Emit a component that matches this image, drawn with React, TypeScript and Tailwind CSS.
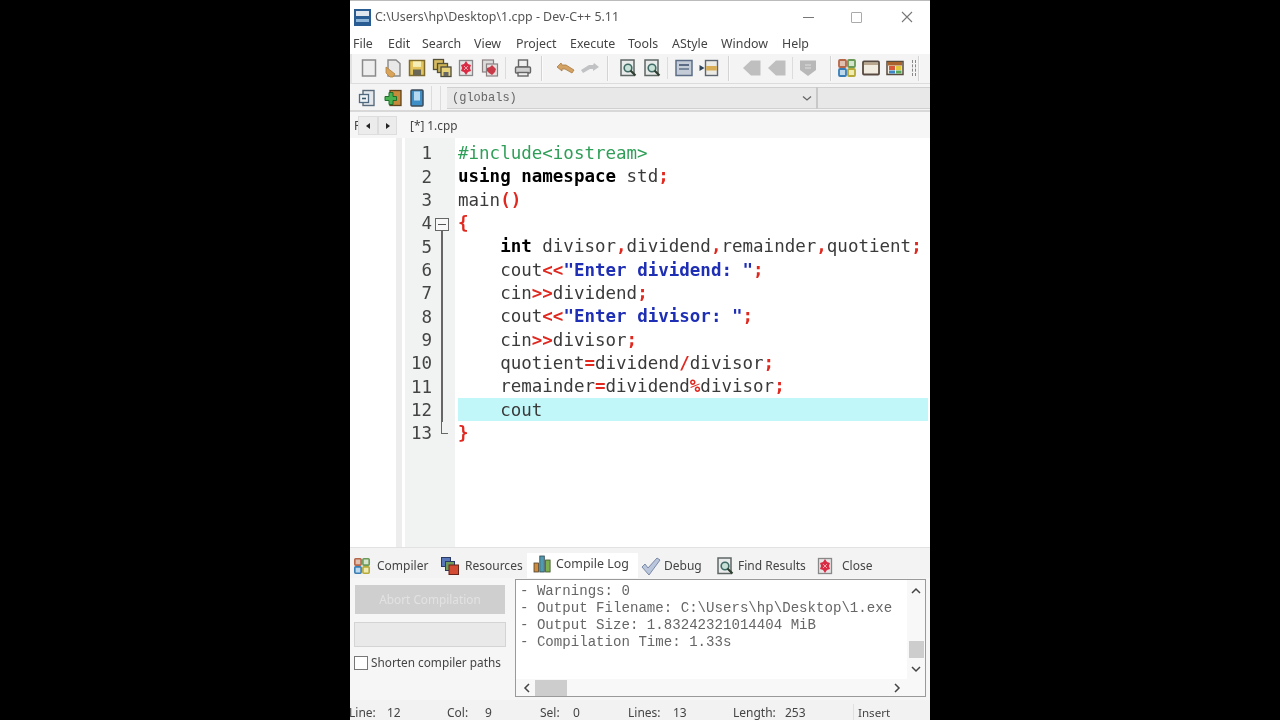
import React from "react";

const mono = "font-['DejaVu_Sans_Mono',monospace]";
const ui = "font-['Noto_Sans','Open_Sans',sans-serif]";
const log = "font-['Liberation_Mono',monospace]";

const Svg = ({ children, s = 20 }: { children: React.ReactNode; s?: number }) => (
  <svg width={s} height={s} viewBox="0 0 20 20" className="shrink-0">{children}</svg>
);

const IconNew = () => <Svg><rect x="3.5" y="2" width="13" height="16" fill="#eeeeee" stroke="#8a8a8a" strokeWidth="1.5" /></Svg>;
const IconOpen = () => <Svg><path d="M5 2h8l4 3.5V18H5z" fill="#e8e8e8" stroke="#888" strokeWidth="1.4" /><path d="M3 9l9 7-2 3H7l-4-4z" fill="#d9a45a" stroke="#b0803f" strokeWidth=".8" /></Svg>;
const IconSave = () => <Svg><rect x="2.5" y="2.5" width="15" height="15" fill="#e3c45c" stroke="#7d6a2c" strokeWidth="1.5" /><rect x="6" y="3.4" width="8" height="5.5" fill="#f6eeb8" /><rect x="6" y="11.5" width="8" height="6" fill="#6b6757" /></Svg>;
const IconSaveAll = () => <Svg><rect x="1.5" y="1.5" width="10" height="10" fill="#d6bb60" stroke="#555038" strokeWidth="1.3" /><rect x="5.5" y="5.5" width="10" height="9" fill="#cdb254" stroke="#555038" strokeWidth="1.3" /><rect x="9" y="9" width="10" height="9.5" fill="#e6d078" stroke="#4a4a3e" strokeWidth="1.3" /><rect x="11.5" y="14" width="5" height="4" fill="#666" /></Svg>;
const IconClose = () => <Svg><rect x="3.5" y="2.5" width="13" height="15" fill="#e6e6e6" stroke="#888" strokeWidth="1.3" /><path d="M5 7l3-1 2-3 2 3 3 1-1 3 1 3-3 1-2 3-2-3-3-1 1-3z" fill="#d92c44" /><path d="M8 8l4 4M12 8l-4 4" stroke="#f2a0a8" strokeWidth="1" /></Svg>;
const IconCloseAll = () => <Svg><rect x="2.5" y="2" width="11" height="12" fill="#dcdcdc" stroke="#8a8080" strokeWidth="1.2" /><rect x="6.5" y="6" width="11" height="12" fill="#e4e0e0" stroke="#8a8080" strokeWidth="1.2" /><path d="M7 10l3-1 2-2 2 2 2 2-1 3-3 3-3-2-2-2z" fill="#c83a48" /></Svg>;
const IconPrint = () => <Svg><rect x="5.5" y="2" width="9" height="7" fill="#efefef" stroke="#666" strokeWidth="1.4" /><rect x="2.5" y="9" width="15" height="6" rx="1" fill="#d0d0d0" stroke="#666" strokeWidth="1.4" /><rect x="5" y="14.5" width="10" height="3.5" fill="#efefef" stroke="#666" strokeWidth="1.4" /></Svg>;
const IconUndo = () => <Svg><path d="M1 9l4-4 1 2 4 0 8 5-2 3-7-4-3 0 0 2z" fill="#d4a262" stroke="#a87a44" strokeWidth=".8" /></Svg>;
const IconRedo = () => <Svg><path d="M19 9l-5-4-1 2h-4l-8 5 2 3 7-4h3v2z" fill="#c0c2c4" /></Svg>;
const IconFind = () => <Svg><rect x="3" y="2" width="13" height="15.5" fill="#e8ebea" stroke="#5f6666" strokeWidth="1.5" /><circle cx="10" cy="10" r="3.8" fill="#c8e2d8" stroke="#3f6a66" strokeWidth="1.6" /><path d="M12.5 12.5l5 5" stroke="#304030" strokeWidth="2.2" /></Svg>;
const IconPanel = () => <Svg><rect x="2" y="2.5" width="16" height="15" fill="#c4ccd8" stroke="#5c6c86" strokeWidth="1.5" /><rect x="5" y="6" width="10" height="2" fill="#5c6c86" /><rect x="5" y="10" width="10" height="2" fill="#7a889e" /></Svg>;
const IconGoto = () => <Svg><rect x="6.5" y="2.5" width="12" height="15" fill="#eceae4" stroke="#5e6672" strokeWidth="1.4" /><rect x="7.2" y="8" width="10.6" height="4.5" fill="#d9ad55" /><path d="M0.5 7l5 3-5 3z" fill="#2f4458" /></Svg>;
const IconGrayL = () => <Svg><path d="M9 2.5h9.5v15H9l-8-7.5z" fill="#bfbfbf" /></Svg>;
const IconGrayS = () => <Svg><path d="M2 2.5h16V12l-8 6-8-6z" fill="#b8b8b8" /><path d="M7 7h6M7 10h6" stroke="#dedede" /></Svg>;
const IconGrid = ({ s = 20 }: { s?: number }) => <Svg s={s}><rect x="2" y="2" width="7" height="7" rx="1" fill="#e0c0ae" stroke="#b5674a" strokeWidth="1.8" /><rect x="11" y="2" width="7" height="7" rx="1" fill="#d5e4cc" stroke="#6b9a58" strokeWidth="1.8" /><rect x="2" y="11" width="7" height="7" rx="1" fill="#bcd8ec" stroke="#3a7db5" strokeWidth="1.8" /><rect x="11" y="11" width="7" height="7" rx="1" fill="#f0ecb0" stroke="#b5a93a" strokeWidth="1.8" /></Svg>;
const IconWin = () => <Svg><rect x="2" y="3.5" width="16" height="13" rx="1" fill="#f2ece0" stroke="#584a40" strokeWidth="1.8" /><rect x="3" y="4.5" width="14" height="2.5" fill="#b9a68c" /></Svg>;
const IconWin2 = () => <Svg><rect x="2" y="3.5" width="16" height="13" fill="#f4f0e4" stroke="#584a3c" strokeWidth="1.5" /><rect x="3" y="4" width="14" height="3.5" fill="#a8642c" /><rect x="4" y="8" width="6" height="4" fill="#d9583a" /><rect x="11" y="8" width="5.5" height="4" fill="#e0c83a" /><rect x="4" y="12.5" width="6" height="3" fill="#3f86c9" /><rect x="11" y="12.5" width="5.5" height="3" fill="#58a85a" /></Svg>;
const IconInsert = () => <Svg><rect x="6" y="2.5" width="11" height="15" fill="#e4e8ec" stroke="#5a6c7c" strokeWidth="1.4" /><rect x="2.5" y="6.5" width="9" height="8" fill="#eef2f6" stroke="#4f6a80" strokeWidth="1.3" /><path d="M5 10.5h4" stroke="#36566e" strokeWidth="1.6" /></Svg>;
const IconAdd = () => <Svg><rect x="7" y="2.5" width="11" height="15" fill="#c68a3a" stroke="#5f4420" strokeWidth="1.3" /><path d="M6 4.5v4H2v4h4v4h4v-4h3.5v-4H10v-4z" fill="#46b350" stroke="#1e6d28" /></Svg>;
const IconBook = () => <Svg><rect x="4" y="2" width="12" height="16" rx="1" fill="#3d8ec7" stroke="#3a4a5a" strokeWidth="1.5" /><rect x="7" y="3.5" width="6" height="9" fill="#b4d9f0" /></Svg>;
const IconRes = () => <Svg s={20}><rect x="1.5" y="1.5" width="9" height="9" fill="#5777b8" stroke="#2a3a64" /><rect x="5.5" y="5.5" width="9" height="9" fill="#6f9a5c" stroke="#2a3a64" /><rect x="9" y="9" width="9.5" height="9.5" fill="#d24b32" stroke="#6a2318" /></Svg>;
const IconBars = () => <Svg><rect x="2" y="9" width="4.5" height="9" fill="#d08a3a" stroke="#4a4030" strokeWidth=".8" /><rect x="7.8" y="2" width="4.5" height="16" fill="#4f9ab0" stroke="#30454a" strokeWidth=".8" /><rect x="13.6" y="6" width="4.5" height="12" fill="#7fb04f" stroke="#3e5226" strokeWidth=".8" /></Svg>;
const IconCheck = () => <Svg><path d="M1 11l3-3 3 4 9-10 3 2-11 15z" fill="#b9c6dc" stroke="#7c8aa8" strokeWidth="1" /></Svg>;

const Sep = () => <div className="w-[2px] h-[25px] mx-[1px] border-l border-[#d4d4d4] bg-[#fafafa] shrink-0" />;
const Thin = () => <div className="w-[1px] h-[22px] bg-[#dcdcdc] shrink-0" />;
const Gap = ({ w }: { w: string }) => <div className={`${w} shrink-0`} />;
const Cell = ({ children, w = "w-[24px]" }: { children: React.ReactNode; w?: string }) => (
  <div className={`${w} flex justify-center shrink-0`}>{children}</div>
);

type Tok = [string, string?];
const R = "text-[#e0281f] font-bold";
const B = "text-[#1f2fb5] font-bold";
const K = "text-black font-bold";
const G = "text-[#2f9f58]";
const lines: Tok[][] = [
  [["#include<iostream>", G]],
  [["using namespace", K], [" std"], [";", R]],
  [["main"], ["()", R]],
  [["{", R]],
  [["    "], ["int", K], [" divisor"], [",", R], ["dividend"], [",", R], ["remainder"], [",", R], ["quotient"], [";", R]],
  [["    cout"], ["<<", R], ['"Enter dividend: "', B], [";", R]],
  [["    cin"], [">>", R], ["dividend"], [";", R]],
  [["    cout"], ["<<", R], ['"Enter divisor: "', B], [";", R]],
  [["    cin"], [">>", R], ["divisor"], [";", R]],
  [["    quotient"], ["=", R], ["dividend"], ["/", R], ["divisor"], [";", R]],
  [["    remainder"], ["=", R], ["dividend"], ["%", R], ["divisor"], [";", R]],
  [["    cout"]],
  [["}", R]],
];

const Fold = ({ n }: { n: number }) => {
  if (n === 4)
    return (
      <div className="relative w-[14px] h-full flex items-center justify-center">
        <div className="w-[14px] h-[13px] border border-[#666] bg-[#f8f8f8] flex items-center justify-center">
          <div className="w-[8px] h-[1px] bg-[#555]" />
        </div>
        <div className="absolute left-[6px] top-[18px] bottom-0 w-[1.5px] bg-[#666]" />
      </div>
    );
  if (n > 4 && n < 13) return <div className="w-[14px] h-full pl-[6px]"><div className="w-[1.5px] h-full bg-[#666]" /></div>;
  if (n === 13)
    return (
      <div className="w-[14px] h-full pl-[6px]">
        <div className="w-[7px] h-[12px] border-l-[1.5px] border-b-[1.5px] border-[#666]" />
      </div>
    );
  return <div className="w-[14px]" />;
};

const Tab = ({ icon, label, w, g, p }: { icon: React.ReactNode; label: string; w: string; g: string; p: string }) => (
  <div className={`${w} ${g} ${p} shrink-0 flex items-center h-[24px] self-end`}>
    {icon}
    <span className="text-[12px] text-[#444] whitespace-nowrap">{label}</span>
  </div>
);

const Stat = ({ w, label, value, vw }: { w: string; label: string; value: string; vw: string }) => (
  <div className={`${w} shrink-0 flex`}>
    <span className={vw}>{label}</span>
    <span>{value}</span>
  </div>
);

export default function App() {
  return (
    <div className="w-[1280px] h-[720px] bg-black flex justify-center overflow-hidden">
      <div className={`w-[580px] h-[720px] bg-[#f5f5f5] flex flex-col overflow-hidden blur-[0.4px] ${ui}`}>
        {/* title */}
        <div className="h-[33px] shrink-0 bg-white border-t border-[#bbb] flex items-center pl-[4px] text-[#555]">
          <svg width="17" height="17" viewBox="0 0 17 17" className="shrink-0">
            <rect width="17" height="17" fill="#2a5c94" />
            <rect x="2" y="2" width="13" height="5" fill="#dfe6ee" />
            <rect x="2" y="10" width="13" height="3" fill="#8fb6d8" />
          </svg>
          <span className="ml-[4px] text-[12.4px] whitespace-nowrap">C:\Users\hp\Desktop\1.cpp - Dev-C++ 5.11</span>
          <div className="ml-auto flex items-center">
            <div className="w-[11px] h-[1px] bg-[#777]" />
            <div className="ml-[37px] w-[11px] h-[11px] border border-[#aaa] rounded-[1px]" />
            <svg width="12" height="12" viewBox="0 0 12 12" className="ml-[39px] mr-[17px]">
              <path d="M1 1l10 10M11 1L1 11" stroke="#777" strokeWidth="1.1" />
            </svg>
          </div>
        </div>
        {/* menu */}
        <div className="h-[21px] shrink-0 bg-white flex items-center pt-[1px] text-[12.4px] text-[#444]">
          <span className="ml-[3px] w-[35px]">File</span>
          <span className="w-[34px]">Edit</span>
          <span className="w-[52px]">Search</span>
          <span className="w-[42px]">View</span>
          <span className="w-[54px]">Project</span>
          <span className="w-[58px]">Execute</span>
          <span className="w-[44px]">Tools</span>
          <span className="w-[49px]">AStyle</span>
          <span className="w-[61px]">Window</span>
          <span>Help</span>
        </div>
        {/* toolbar 1 */}
        <div className="h-[30px] shrink-0 bg-[#f4f4f4] border-b border-[#dcdcdc] border-l-2 border-l-[#e2e2e2] flex items-center pl-[5px] pb-[1px] overflow-hidden">
          <Cell><IconNew /></Cell>
          <Cell w="w-[23px]"><IconOpen /></Cell>
          <Cell w="w-[25px]"><IconSave /></Cell>
          <Cell w="w-[25px]"><IconSaveAll /></Cell>
          <Cell><IconClose /></Cell>
          <Cell><IconCloseAll /></Cell>
          <Gap w="w-[3px]" />
          <Thin />
          <Cell w="w-[34px]"><IconPrint /></Cell>
          <Sep />
          <Gap w="w-[10px]" />
          <Cell><IconUndo /></Cell>
          <Cell><IconRedo /></Cell>
          <Gap w="w-[4px]" />
          <Sep />
          <Gap w="w-[8px]" />
          <IconFind />
          <Gap w="w-[4px]" />
          <IconFind />
          <Gap w="w-[5px]" />
          <Thin />
          <Gap w="w-[6px]" />
          <IconPanel />
          <Gap w="w-[5px]" />
          <IconGoto />
          <Gap w="w-[8px]" />
          <Sep />
          <Gap w="w-[11px]" />
          <IconGrayL />
          <Gap w="w-[5px]" />
          <IconGrayL />
          <Gap w="w-[5px]" />
          <Thin />
          <Gap w="w-[5px]" />
          <IconGrayS />
          <Gap w="w-[11px]" />
          <Sep />
          <Gap w="w-[4px]" />
          <IconGrid />
          <Gap w="w-[4px]" />
          <IconWin />
          <Gap w="w-[4px]" />
          <IconWin2 />
          <div className="w-[4px] ml-[7px] h-[16px] border-x border-dashed border-[#888] shrink-0" />
          <Gap w="w-[1px]" />
          <Sep />
        </div>
        {/* toolbar 2 */}
        <div className="h-[28px] shrink-0 bg-[#f4f4f4] border-b-2 border-[#d8d8d8] flex items-center pl-[7px] pt-[1px]">
          <IconInsert />
          <Gap w="w-[6px]" />
          <IconAdd />
          <Gap w="w-[4px]" />
          <IconBook />
          <Gap w="w-[4px]" />
          <div className="w-[10px] h-[24px] border-x border-[#dcdcdc] shrink-0" />
          <div className="ml-[6px] w-[369px] h-[22px] bg-[#e8e8e8] border-y border-[#d0d0d0] flex items-center pl-[5px] pr-[3px] shrink-0">
            <span className={`text-[12px] text-[#666] pt-[1px] ${log}`}>(globals)</span>
            <svg width="12" height="12" viewBox="0 0 12 12" className="ml-auto">
              <path d="M2 4.5l4 3.5 4-3.5" fill="none" stroke="#666" strokeWidth="1.3" />
            </svg>
          </div>
          <div className="w-[2px] h-[22px] bg-[#c8c8c8] shrink-0" />
          <div className="flex-1 h-[22px] bg-[#e8e8e8] border-y border-[#d0d0d0]" />
        </div>
        {/* tabs */}
        <div className="h-[26px] shrink-0 bg-[#f6f6f6] flex items-center pt-[1px]">
          <span className="w-[4px] overflow-hidden text-[12px] text-[#444] ml-[4px]">P</span>
          <div className="w-[20px] h-[19px] bg-[#ececec] border border-[#ddd] flex items-center justify-center">
            <div className="w-0 h-0 border-y-[3px] border-y-transparent border-r-[4px] border-r-[#222]" />
          </div>
          <div className="w-[19px] h-[19px] bg-[#ececec] border border-[#ddd] flex items-center justify-center">
            <div className="w-0 h-0 border-y-[3px] border-y-transparent border-l-[4px] border-l-[#222]" />
          </div>
          <span className="ml-[13px] text-[11.8px] text-[#444]">[*] 1.cpp</span>
        </div>
        {/* editor area */}
        <div className="flex-1 min-h-0 flex bg-white">
          <div className="w-[46px] shrink-0 bg-white" />
          <div className="w-[6px] shrink-0 bg-[#ededed]" />
          <div className="w-[3px] shrink-0 bg-white" />
          <div className="w-[50px] shrink-0 bg-[#f1f2f2] pt-[4.5px]">
            {lines.map((_, i) => (
              <div key={i} className={`h-[23.33px] flex items-center text-[17.5px] text-[#444] ${mono}`}>
                <span className="w-[27px] text-right leading-none">{i + 1}</span>
                <div className="w-[3px]" />
                <Fold n={i + 1} />
              </div>
            ))}
          </div>
          <div className="w-[3px] shrink-0" />
          <div className={`flex-1 min-w-0 pt-[3.5px] text-[17.5px] text-[#3a3a3a] ${mono}`}>
            {lines.map((l, i) => (
              <div key={i} className={`h-[23.33px] flex items-center whitespace-pre mr-[2px] ${i === 11 ? "bg-[#c2f7fa]" : ""}`}>
                <span>
                  {l.map((t, j) => (
                    <span key={j} className={t[1] ?? ""}>{t[0]}</span>
                  ))}
                </span>
              </div>
            ))}
          </div>
        </div>
        {/* bottom tabs */}
        <div className="h-[31px] shrink-0 bg-[#f3f3f3] flex items-center border-t border-[#e2e2e2] pl-[1px]">
          <Tab w="w-[87px]" g="gap-[6px]" p="pl-[2px]" icon={<IconGrid s={18} />} label="Compiler" />
          <Tab w="w-[89px]" g="gap-[5px]" p="pl-[2px]" icon={<IconRes />} label="Resources" />
          <div className="w-[111px] shrink-0 h-[25px] self-end bg-white flex items-center gap-[4px] pl-[5px] pb-[3px]">
            <IconBars />
            <span className="text-[12.4px] text-[#444] whitespace-nowrap">Compile Log</span>
          </div>
          <Tab w="w-[75px]" g="gap-[3px]" p="pl-[3px]" icon={<IconCheck />} label="Debug" />
          <Tab w="w-[100px]" g="gap-[3px]" p="pl-[2px]" icon={<IconFind />} label="Find Results" />
          <Tab w="w-[70px]" g="gap-[7px]" p="pl-[2px]" icon={<IconClose />} label="Close" />
        </div>
        {/* bottom panel */}
        <div className="h-[122px] shrink-0 flex bg-[#f6f6f6] pl-[5px] pr-[4px] pt-[1px]">
          <div className="w-[152px] shrink-0 pt-[6px]">
            <div className="w-[150px] h-[29px] bg-[#cfcfcf] flex items-center justify-center text-[11.8px] text-[#e2e2e2]">
              Abort Compilation
            </div>
            <div className="w-[152px] h-[25px] mt-[8px] -ml-[1px] bg-[#e9e9e9] border border-[#d4d4d4]" />
            <div className="flex items-center mt-[7px] -ml-[1px] gap-[3px] whitespace-nowrap text-[11.8px] text-[#444]">
              <div className="w-[14px] h-[14px] border border-[#777] bg-white" />
              Shorten compiler paths
            </div>
          </div>
          <div className="ml-[8px] flex-1 h-[118px] border border-[#9a9a9a] bg-white flex">
            <div className="flex-1 min-w-0 flex flex-col">
              <div className={`flex-1 pl-[4px] pt-[3px] text-[14.1px] leading-[17px] text-[#666] whitespace-pre ${log}`}>
                <div>- Warnings: 0</div>
                <div>- Output Filename: C:\Users\hp\Desktop\1.exe</div>
                <div>- Output Size: 1.83242321014404 MiB</div>
                <div>- Compilation Time: 1.33s</div>
              </div>
              <div className="h-[17px] bg-[#f8f8f8] flex items-center pl-[7px] pr-[6px]">
                <svg width="8" height="10" viewBox="0 0 8 10"><path d="M6 1L2 5l4 4" fill="none" stroke="#444" strokeWidth="1.5" /></svg>
                <div className="ml-[4px] w-[32px] h-[16px] bg-[#cdcdcd]" />
                <svg width="8" height="10" viewBox="0 0 8 10" className="ml-auto"><path d="M2 1l4 4-4 4" fill="none" stroke="#444" strokeWidth="1.5" /></svg>
              </div>
            </div>
            <div className="w-[18px] shrink-0 bg-[#f8f8f8] flex flex-col items-center pt-[7px]">
              <svg width="10" height="8" viewBox="0 0 10 8"><path d="M1 6l4-4 4 4" fill="none" stroke="#444" strokeWidth="1.5" /></svg>
              <div className="mt-[46px] w-[15px] h-[17px] bg-[#cdcdcd]" />
              <svg width="10" height="8" viewBox="0 0 10 8" className="mt-[7px]"><path d="M1 2l4 4 4-4" fill="none" stroke="#444" strokeWidth="1.5" /></svg>
            </div>
          </div>
        </div>
        {/* status */}
        <div className="h-[20px] shrink-0 bg-[#f2f2f2] flex items-center pt-[5px] text-[12px] text-[#444] -ml-[1px] whitespace-nowrap">
          <Stat w="w-[98px]" vw="w-[38px]" label="Line:" value="12" />
          <Stat w="w-[93px]" vw="w-[38px]" label="Col:" value="9" />
          <Stat w="w-[88px]" vw="w-[33px]" label="Sel:" value="0" />
          <Stat w="w-[105px]" vw="w-[45px]" label="Lines:" value="13" />
          <Stat w="w-[120px]" vw="w-[52px]" label="Length:" value="253" />
          <span className="border-l border-[#e0e0e0] pl-[4px] text-[11.6px]">Insert</span>
        </div>
      </div>
    </div>
  );
}
